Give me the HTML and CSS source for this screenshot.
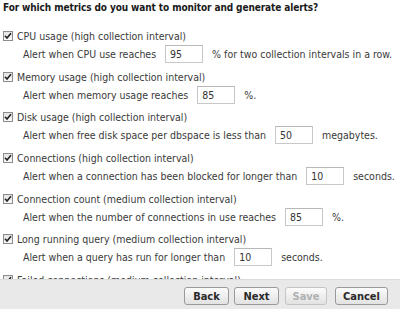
FILE: index.html
```html
<!DOCTYPE html>
<html>
<head>
<meta charset="utf-8">
<link rel="stylesheet" href="styles.css">
</head>
<body>
<div class="page">
  <div class="content">
    <div class="title">For which metrics do you want to monitor and generate alerts?</div>
    <div class="metric">
      <div class="check-row"><span class="cb"><svg viewBox="0 0 10 10" width="10" height="10"><path d="M2 4.8 L4 7 L8 2.2" fill="none" stroke="#222" stroke-width="1.6"/></svg></span><span>CPU usage (high collection interval)</span></div>
      <div class="alert-row"><span>Alert when CPU use reaches</span><span class="field">95</span><span>% for two collection intervals in a row.</span></div>
    </div>
    <div class="metric">
      <div class="check-row"><span class="cb"><svg viewBox="0 0 10 10" width="10" height="10"><path d="M2 4.8 L4 7 L8 2.2" fill="none" stroke="#222" stroke-width="1.6"/></svg></span><span>Memory usage (high collection interval)</span></div>
      <div class="alert-row"><span>Alert when memory usage reaches</span><span class="field">85</span><span>%.</span></div>
    </div>
    <div class="metric">
      <div class="check-row"><span class="cb"><svg viewBox="0 0 10 10" width="10" height="10"><path d="M2 4.8 L4 7 L8 2.2" fill="none" stroke="#222" stroke-width="1.6"/></svg></span><span>Disk usage (high collection interval)</span></div>
      <div class="alert-row"><span>Alert when free disk space per dbspace is less than</span><span class="field">50</span><span>megabytes.</span></div>
    </div>
    <div class="metric">
      <div class="check-row"><span class="cb"><svg viewBox="0 0 10 10" width="10" height="10"><path d="M2 4.8 L4 7 L8 2.2" fill="none" stroke="#222" stroke-width="1.6"/></svg></span><span>Connections (high collection interval)</span></div>
      <div class="alert-row"><span>Alert when a connection has been blocked for longer than</span><span class="field">10</span><span>seconds.</span></div>
    </div>
    <div class="metric">
      <div class="check-row"><span class="cb"><svg viewBox="0 0 10 10" width="10" height="10"><path d="M2 4.8 L4 7 L8 2.2" fill="none" stroke="#222" stroke-width="1.6"/></svg></span><span>Connection count (medium collection interval)</span></div>
      <div class="alert-row"><span>Alert when the number of connections in use reaches</span><span class="field">85</span><span>%.</span></div>
    </div>
    <div class="metric">
      <div class="check-row"><span class="cb"><svg viewBox="0 0 10 10" width="10" height="10"><path d="M2 4.8 L4 7 L8 2.2" fill="none" stroke="#222" stroke-width="1.6"/></svg></span><span>Long running query (medium collection interval)</span></div>
      <div class="alert-row"><span>Alert when a query has run for longer than</span><span class="field">10</span><span>seconds.</span></div>
    </div>
    <div class="metric">
      <div class="check-row"><span class="cb"><svg viewBox="0 0 10 10" width="10" height="10"><path d="M2 4.8 L4 7 L8 2.2" fill="none" stroke="#222" stroke-width="1.6"/></svg></span><span>Failed connections (medium collection interval)</span></div>
    </div>
  </div>
  <div class="footer">
    <button class="btn">Back</button>
    <button class="btn">Next</button>
    <button class="btn disabled">Save</button>
    <button class="btn cancel">Cancel</button>
  </div>
</div>
</body>
</html>
```
FILE: styles.css
```css
html, body {
  margin: 0;
  padding: 0;
  background: #fff;
}
.page {
  width: 400px;
  height: 309px;
  display: flex;
  flex-direction: column;
  overflow: hidden;
  font-family: "DejaVu Sans Condensed", "DejaVu Sans", sans-serif;
  font-size: 10.5px;
  color: #3a3a3a;
  white-space: nowrap;
}
.content {
  flex: 1;
  overflow: hidden;
  padding: 0 0 0 3px;
}
.title {
  font-weight: bold;
  font-size: 10px;
  letter-spacing: -0.1px;
  color: #1a1a1a;
  height: 16px;
  line-height: 16px;
  margin-bottom: 11px;
}
.metric {
  height: 40.7px;
}
.check-row {
  display: flex;
  align-items: center;
  height: 18px;
  gap: 4px;
}
.cb {
  width: 10px;
  height: 10px;
  box-sizing: border-box;
  border: 1px solid #8c8c8c;
  background: linear-gradient(#e4e4e4, #fafafa);
  display: flex;
  flex: none;
}
.cb svg {
  margin: -1px;
}
.alert-row {
  display: flex;
  align-items: center;
  height: 18px;
  padding-left: 20px;
  gap: 9px;
}
.field {
  flex: none;
  width: 38px;
  height: 18px;
  box-sizing: border-box;
  border: 1px solid #c8c8c8;
  border-top-color: #b8b8b8;
  padding: 0 4px;
  line-height: 16px;
  color: #333;
}
.footer {
  height: 30px;
  flex: none;
  background: #e9e9e9;
  border-top: 1px solid #dcdcdc;
  box-sizing: border-box;
  display: flex;
  justify-content: flex-end;
  align-items: center;
  gap: 5px;
  padding: 3px 12px 0 0;
}
.btn {
  font-family: "DejaVu Sans Condensed", "DejaVu Sans", sans-serif;
  font-size: 11px;
  font-weight: bold;
  color: #2a2a2a;
  height: 18px;
  width: 45px;
  padding: 0;
  border: 1px solid #9a9a9a;
  border-radius: 3px;
  background: linear-gradient(#fbfbfb, #e2e2e2);
}
.btn.disabled {
  color: #b0b0b0;
  border-color: #c4c4c4;
  width: 42px;
  margin-left: 1px;
}
.btn.cancel {
  width: 53px;
  margin-left: 3px;
}
```
